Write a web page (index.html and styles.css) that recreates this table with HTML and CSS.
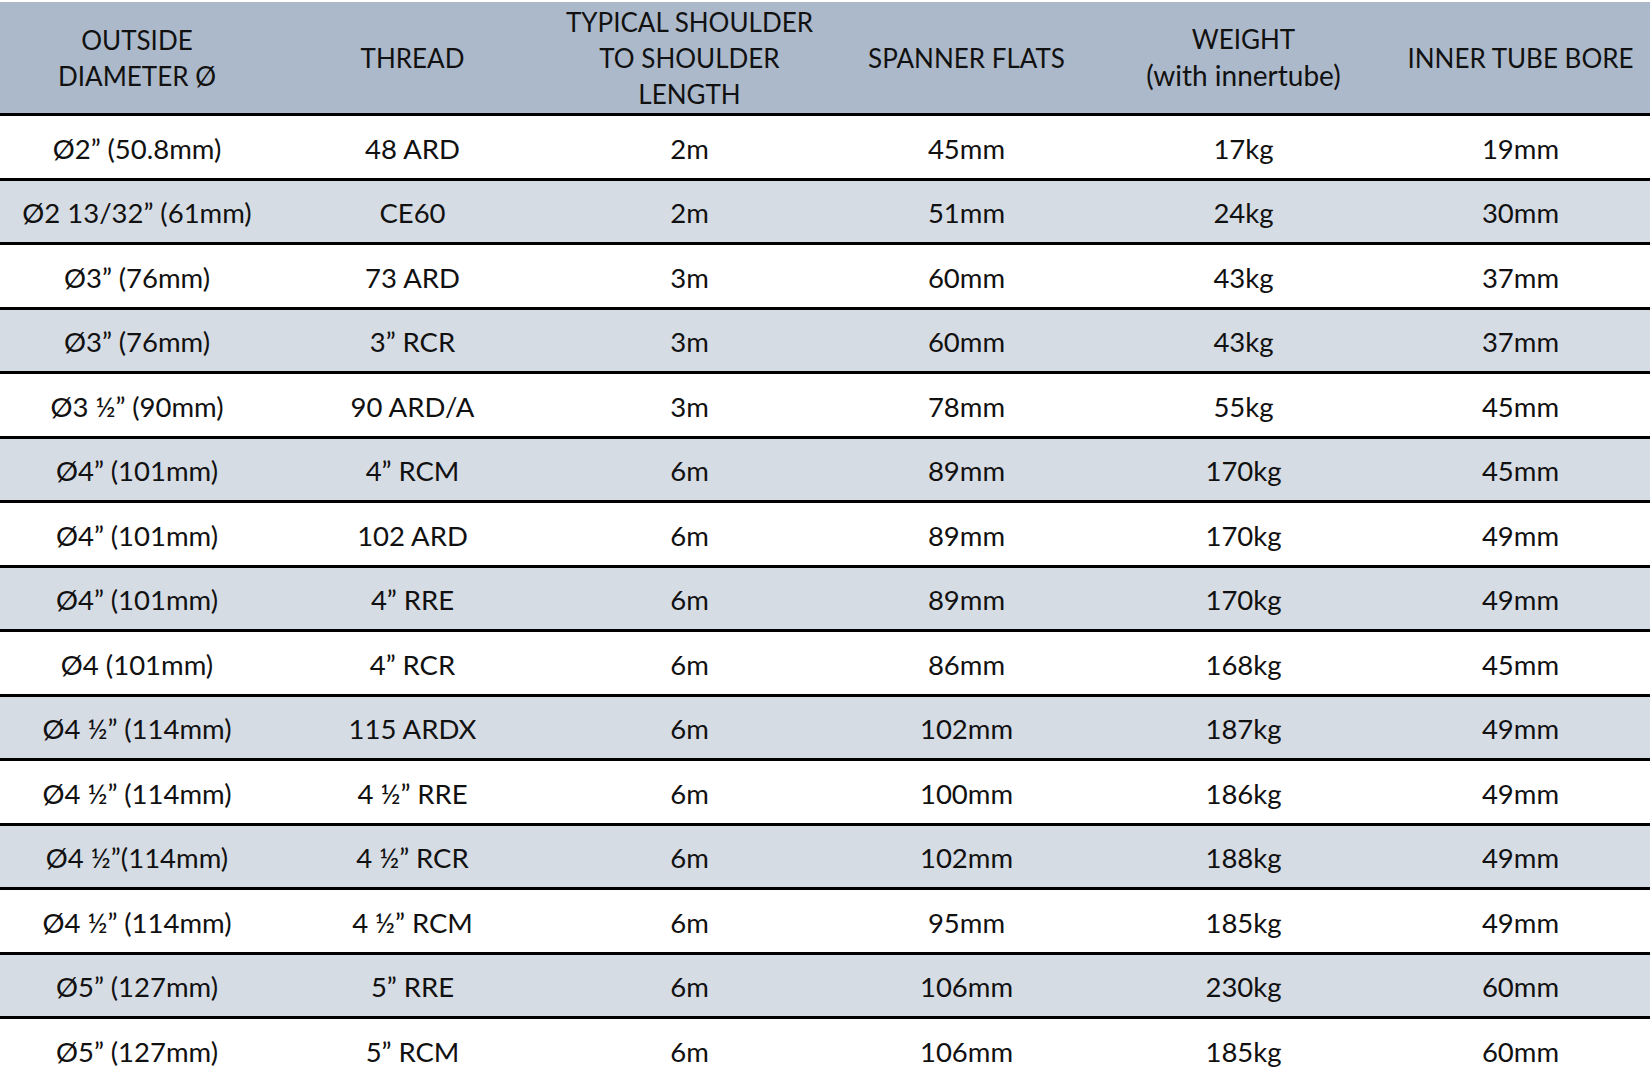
FILE: index.html
```html
<!DOCTYPE html>
<html lang="en">
<head>
<meta charset="utf-8">
<title>Drill pipe specifications</title>
<link rel="stylesheet" href="styles.css">
</head>
<body>
<div class="spec-table">
  <div class="row head">
    <div class="cell"><span class="lbl">OUTSIDE<br>DIAMETER Ø</span></div>
    <div class="cell"><span class="lbl">THREAD</span></div>
    <div class="cell"><span class="lbl">TYPICAL SHOULDER<br>TO SHOULDER<br>LENGTH</span></div>
    <div class="cell"><span class="lbl">SPANNER FLATS</span></div>
    <div class="cell"><span class="lbl">WEIGHT<br><span class="sub">(with innertube)</span></span></div>
    <div class="cell"><span class="lbl">INNER TUBE BORE</span></div>
  </div>
  <div class="row">
    <div class="cell">Ø2” (50.8mm)</div><div class="cell">48 ARD</div><div class="cell">2m</div><div class="cell">45mm</div><div class="cell">17kg</div><div class="cell">19mm</div>
  </div>
  <div class="row alt">
    <div class="cell">Ø2 13/32” (61mm)</div><div class="cell">CE60</div><div class="cell">2m</div><div class="cell">51mm</div><div class="cell">24kg</div><div class="cell">30mm</div>
  </div>
  <div class="row">
    <div class="cell">Ø3” (76mm)</div><div class="cell">73 ARD</div><div class="cell">3m</div><div class="cell">60mm</div><div class="cell">43kg</div><div class="cell">37mm</div>
  </div>
  <div class="row alt">
    <div class="cell">Ø3” (76mm)</div><div class="cell">3” RCR</div><div class="cell">3m</div><div class="cell">60mm</div><div class="cell">43kg</div><div class="cell">37mm</div>
  </div>
  <div class="row">
    <div class="cell">Ø3 ½” (90mm)</div><div class="cell">90 ARD/A</div><div class="cell">3m</div><div class="cell">78mm</div><div class="cell">55kg</div><div class="cell">45mm</div>
  </div>
  <div class="row alt">
    <div class="cell">Ø4” (101mm)</div><div class="cell">4” RCM</div><div class="cell">6m</div><div class="cell">89mm</div><div class="cell">170kg</div><div class="cell">45mm</div>
  </div>
  <div class="row">
    <div class="cell">Ø4” (101mm)</div><div class="cell">102 ARD</div><div class="cell">6m</div><div class="cell">89mm</div><div class="cell">170kg</div><div class="cell">49mm</div>
  </div>
  <div class="row alt">
    <div class="cell">Ø4” (101mm)</div><div class="cell">4” RRE</div><div class="cell">6m</div><div class="cell">89mm</div><div class="cell">170kg</div><div class="cell">49mm</div>
  </div>
  <div class="row">
    <div class="cell">Ø4 (101mm)</div><div class="cell">4” RCR</div><div class="cell">6m</div><div class="cell">86mm</div><div class="cell">168kg</div><div class="cell">45mm</div>
  </div>
  <div class="row alt">
    <div class="cell">Ø4 ½” (114mm)</div><div class="cell">115 ARDX</div><div class="cell">6m</div><div class="cell">102mm</div><div class="cell">187kg</div><div class="cell">49mm</div>
  </div>
  <div class="row">
    <div class="cell">Ø4 ½” (114mm)</div><div class="cell">4 ½” RRE</div><div class="cell">6m</div><div class="cell">100mm</div><div class="cell">186kg</div><div class="cell">49mm</div>
  </div>
  <div class="row alt">
    <div class="cell">Ø4 ½”(114mm)</div><div class="cell">4 ½” RCR</div><div class="cell">6m</div><div class="cell">102mm</div><div class="cell">188kg</div><div class="cell">49mm</div>
  </div>
  <div class="row">
    <div class="cell">Ø4 ½” (114mm)</div><div class="cell">4 ½” RCM</div><div class="cell">6m</div><div class="cell">95mm</div><div class="cell">185kg</div><div class="cell">49mm</div>
  </div>
  <div class="row alt">
    <div class="cell">Ø5” (127mm)</div><div class="cell">5” RRE</div><div class="cell">6m</div><div class="cell">106mm</div><div class="cell">230kg</div><div class="cell">60mm</div>
  </div>
  <div class="row last">
    <div class="cell">Ø5” (127mm)</div><div class="cell">5” RCM</div><div class="cell">6m</div><div class="cell">106mm</div><div class="cell">185kg</div><div class="cell">60mm</div>
  </div>
</div>
</body>
</html>
```
FILE: styles.css
```css
html, body {
  margin: 0;
  padding: 0;
  overflow: hidden;
  background: #ffffff;
}

body {
  font-family: "Lato", "Open Sans", sans-serif;
  font-size: 27.5px;
  color: #111111;
}

.spec-table {
  width: 1660px;
  padding-top: 2px;
}

.row {
  display: grid;
  grid-template-columns: 274px repeat(5, 277px);
  height: 61.5px;
  border-bottom: 3px solid #000;
  background: #ffffff;
}

.row.alt {
  background: #d6dce4;
}

.row.head {
  height: 111px;
  background: #acb9ca;
  font-size: 26px;
  line-height: 36px;
}

.lbl {
  display: block;
}

.head .sub {
  font-size: 28px;
}

.row.last {
  border-bottom: none;
}

.cell {
  display: flex;
  align-items: center;
  justify-content: center;
  text-align: center;
  white-space: nowrap;
  padding-top: 3px;
  box-sizing: border-box;
}

.head .cell {
  padding-top: 0;
}
```
